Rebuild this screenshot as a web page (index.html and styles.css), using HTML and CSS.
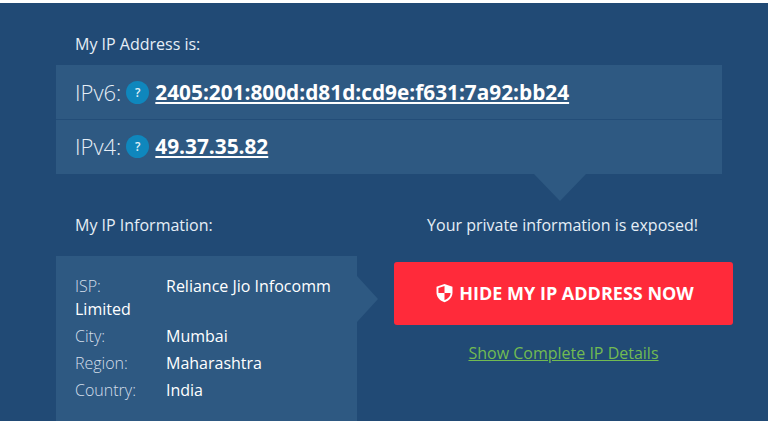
FILE: index.html
```html
<!DOCTYPE html>
<html lang="en">
<head>
    <meta charset="UTF-8">
    <meta name="viewport" content="width=device-width, initial-scale=1.0">
    <title>My IP Address</title>
    <link rel="stylesheet" href="styles.css">
</head>
<body>
    <div class="hero">
        <h2 class="section-label ip-label">My IP Address is:</h2>

        <div class="ip-panel">
            <div class="ip-row">
                <span class="ip-type">IPv6:</span>
                <span class="help-badge">?</span>
                <a class="ip-value" href="#">2405:201:800d:d81d:cd9e:f631:7a92:bb24</a>
            </div>
            <div class="ip-row">
                <span class="ip-type">IPv4:</span>
                <span class="help-badge">?</span>
                <a class="ip-value" href="#">49.37.35.82</a>
            </div>
        </div>

        <div class="details">
            <div class="info-column">
                <h2 class="section-label info-label">My IP Information:</h2>
                <div class="info-box">
                    <p class="info-row"><span class="info-key">ISP:</span>Reliance Jio Infocomm Limited</p>
                    <p class="info-row"><span class="info-key">City:</span>Mumbai</p>
                    <p class="info-row"><span class="info-key">Region:</span>Maharashtra</p>
                    <p class="info-row"><span class="info-key">Country:</span>India</p>
                </div>
            </div>

            <div class="action-column">
                <p class="warning">Your private information is exposed!</p>
                <a class="hide-btn" href="#">
                    <svg class="shield" viewBox="0 0 16 18" width="17" height="20" aria-hidden="true">
                        <path d="M8 .5 15.500 3v5.500c0 4.300-3 7.600-7.500 9.200C3.500 16.100.5 12.800.5 8.500V3Z" fill="#fff"/>
                        <path d="M8 2.400 2.300 4.300V9H8ZM8 9v6.800c3.400-1.400 5.700-3.800 5.700-6.800Z" fill="#ff2a3a"/>
                    </svg>
                    HIDE MY IP ADDRESS NOW
                </a>
                <a class="details-link" href="#">Show Complete IP Details</a>
            </div>
        </div>
    </div>
</body>
</html>
```

FILE: styles.css
```css
* {
    margin: 0;
    padding: 0;
    box-sizing: border-box;
    font-family: 'Open Sans', sans-serif;
}

html, body {
    height: 100%;
    overflow: hidden;
}

body {
    background-color: #fff;
    padding-top: 3px;
}

.hero {
    height: 418px;
    background-color: #214a75;
    color: #fff;
    padding: 31px 46px 0 56px;
    overflow: hidden;
}

.section-label {
    font-size: 16px;
    font-weight: 400;
    line-height: 20px;
    color: #e6eef6;
    padding-left: 19px;
}

.ip-label {
    margin-bottom: 11px;
}

/* IP rows */
.ip-panel {
    position: relative;
    background-color: #2e5982;
}

.ip-panel::after {
    content: "";
    position: absolute;
    top: 100%;
    left: 478px;
    border-style: solid;
    border-width: 27px 26px 0;
    border-color: #2e5982 transparent transparent;
}

.ip-row {
    display: flex;
    align-items: center;
    height: 54px;
    padding-left: 19px;
    font-size: 20.800px;
}

.ip-row + .ip-row {
    height: 55px;
    padding-bottom: 2px;
    border-top: 1px solid #234d78;
}

.ip-type {
    font-size: 22px;
    font-weight: 300;
    color: #e6eef6;
}

.help-badge {
    width: 23px;
    height: 23px;
    margin: 0 6px 0 5px;
    border-radius: 50%;
    background-color: #0f87bd;
    color: #e2f1f8;
    font-size: 12px;
    font-weight: 600;
    line-height: 23px;
    text-align: center;
}

.ip-value {
    color: #fff;
    font-weight: 700;
    text-decoration: underline;
}

/* Lower half */
.details {
    display: flex;
    margin-top: 41px;
    margin-right: -11px;
}

.info-column {
    width: 301px;
}

.info-label {
    margin-bottom: 21px;
}

.info-box {
    position: relative;
    height: 200px;
    padding: 19px 19px 0;
    background-color: #2e5982;
}

.info-box::after {
    content: "";
    position: absolute;
    top: 20px;
    left: 100%;
    border-style: solid;
    border-width: 23px 0 23px 21px;
    border-color: transparent transparent transparent #2e5982;
}

.info-row {
    font-size: 16px;
    line-height: 23px;
    margin-bottom: 4px;
    color: #fff;
}

.info-key {
    display: inline-block;
    width: 91px;
    font-weight: 300;
    color: #d3deea;
}

.action-column {
    width: 339px;
    margin-left: 37px;
    text-align: center;
}

.warning {
    font-size: 16px;
    line-height: 20px;
    color: #e6eef6;
    margin-bottom: 27px;
    padding-right: 2px;
}

.hide-btn {
    display: flex;
    align-items: center;
    justify-content: center;
    gap: 6px;
    height: 63px;
    margin-bottom: 17px;
    padding-left: 3px;
    padding-bottom: 2px;
    background-color: #ff2a3a;
    border-radius: 3px;
    color: #fff;
    font-size: 18px;
    font-weight: 700;
    text-decoration: none;
}

.details-link {
    font-size: 16px;
    line-height: 20px;
    color: #72bb52;
}
```
